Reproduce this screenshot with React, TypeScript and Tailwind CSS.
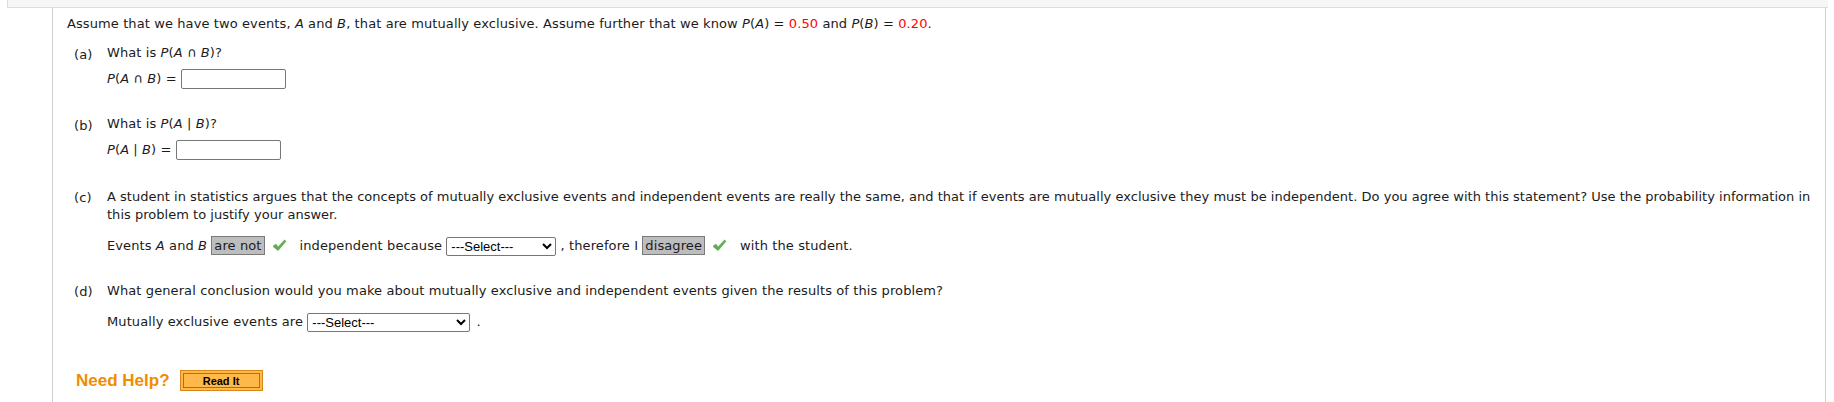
import React from "react";

const Check: React.FC = () => (
    <svg width="15" height="13" viewBox="0 0 16 14" className="inline-block ml-[7px] mr-[13px] align-[-2px]">
        <path d="M1 8 L4 5.5 L6.5 8.5 L13.5 1 L15 2.5 L6.5 12.5 Z" fill="#5fae4f" stroke="#4a9a3c" strokeWidth="0.6" />
    </svg>
);

const Answer: React.FC<{ text: string }> = ({ text }) => (
    <span className="inline-block bg-[#bdbdbd] border border-[#7a7a7a] px-[2px] leading-[17px]">{text}</span>
);

const Select: React.FC<{ width: string }> = ({ width }) => (
    <select
        className={`${width} h-[19px] border border-[#767676] rounded-[2px] bg-white text-[13px] tracking-normal text-black align-middle`}
        style={{ fontFamily: "'Liberation Sans', Arial, sans-serif" }}
    >
        <option>---Select---</option>
    </select>
);

const Var: React.FC<{ children: React.ReactNode }> = ({ children }) => <i>{children}</i>;

export default function App() {
    return (
        <div className="w-[1834px] h-[402px] bg-white text-[#1b1b1b] text-[13px] tracking-[0.1px] overflow-hidden" style={{ fontFamily: "'DejaVu Sans', Verdana, sans-serif" }}>
            <div className="ml-[7px] mr-[6px] h-[8px] bg-[#f6f6f6] border-b border-l border-[#dcdcdc]"></div>
            <div className="ml-[52px] w-[1774px] h-[394px] border-l border-r border-[#d0d0d0] pl-[14px]">
                <p className="pt-[8px] leading-[16px]">
                    Assume that we have two events, <Var>A</Var> and <Var>B</Var>, that are mutually exclusive. Assume further that we know <Var>P</Var>(<Var>A</Var>) = <span className="text-[#ff0000]">0.50</span> and <Var>P</Var>(<Var>B</Var>) = <span className="text-[#ff0000]">0.20</span>.
                </p>

                <div className="flex mt-[13px]">
                    <span className="w-[40px] pl-[7px] shrink-0">(a)</span>
                    <div>
                        <p className="leading-[16px]">What is <Var>P</Var>(<Var>A</Var> ∩ <Var>B</Var>)?</p>
                        <div className="flex items-center mt-[8px] gap-[4px]">
                            <span><Var>P</Var>(<Var>A</Var> ∩ <Var>B</Var>) =</span>
                            <div className="w-[105px] h-[20px] border border-[#767676] rounded-[2px]"></div>
                        </div>
                    </div>
                </div>

                <div className="flex mt-[27px]">
                    <span className="w-[40px] pl-[7px] shrink-0">(b)</span>
                    <div>
                        <p className="leading-[16px]">What is <Var>P</Var>(<Var>A</Var> | <Var>B</Var>)?</p>
                        <div className="flex items-center mt-[8px] gap-[4px]">
                            <span><Var>P</Var>(<Var>A</Var> | <Var>B</Var>) =</span>
                            <div className="w-[105px] h-[20px] border border-[#767676] rounded-[2px]"></div>
                        </div>
                    </div>
                </div>

                <div className="flex mt-[28px]">
                    <span className="w-[40px] pl-[7px] shrink-0">(c)</span>
                    <div>
                        <p className="leading-[18px] tracking-[0.02px]">
                            A student in statistics argues that the concepts of mutually exclusive events and independent events are really the same, and that if events are mutually exclusive they must be independent. Do you agree with this statement? Use the probability information in this problem to justify your answer.
                        </p>
                        <div className="mt-[12px] leading-[20px]">
                            Events <Var>A</Var> and <Var>B</Var> <Answer text="are not" />
                            <Check />
                            <span>independent because </span>
                            <Select width="w-[110px]" />
                            <span> , therefore I </span>
                            <Answer text="disagree" />
                            <Check />
                            <span>with the student.</span>
                        </div>
                    </div>
                </div>

                <div className="flex mt-[26px]">
                    <span className="w-[40px] pl-[7px] shrink-0">(d)</span>
                    <div>
                        <p className="leading-[18px]">What general conclusion would you make about mutually exclusive and independent events given the results of this problem?</p>
                        <div className="mt-[12px] leading-[20px]">
                            Mutually exclusive events are <Select width="w-[163px]" /> <span className="ml-[2px]">.</span>
                        </div>
                    </div>
                </div>

                <div className="flex items-center mt-[36px] ml-[9px] gap-[10px]">
                    <span className="text-[#f08c00] text-[17px] font-bold tracking-normal" style={{ fontFamily: "'Liberation Sans', Arial, sans-serif" }}>Need Help?</span>
                    <div className="w-[83px] h-[21px] border border-[#d9861b] bg-[#ffb84a] p-[2px]">
                        <div className="h-full border border-[#b56d10] flex items-center justify-center text-[11px] font-bold text-black tracking-normal" style={{ fontFamily: "'Liberation Sans', Arial, sans-serif" }}>Read It</div>
                    </div>
                </div>
            </div>
        </div>
    );
}
